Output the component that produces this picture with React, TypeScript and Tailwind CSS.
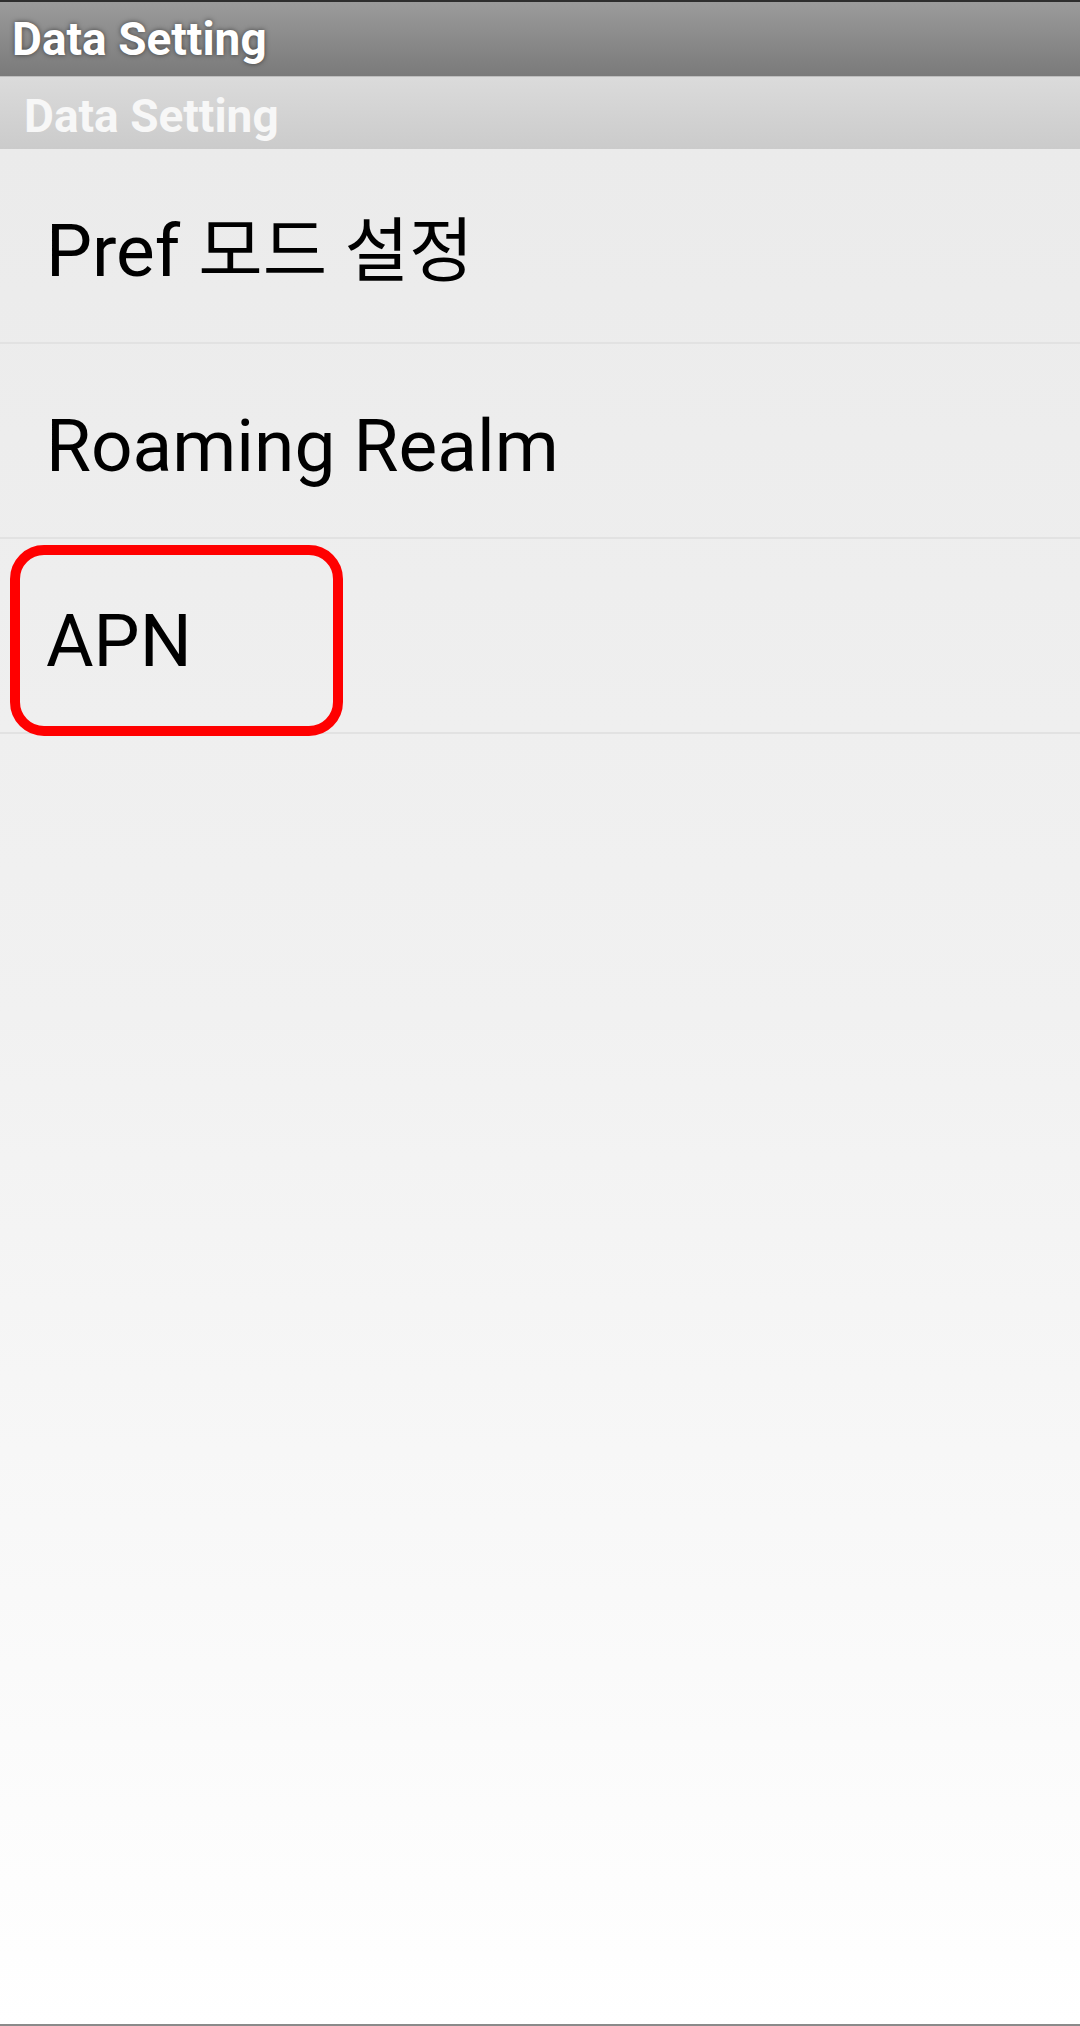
const items = [
  { latin: 'Pref ', korean: '모드 설정' },
  { latin: 'Roaming Realm', korean: '' },
  { latin: 'APN', korean: '' },
]

export default function App() {
  return (
    <div
      className="flex h-[2026px] w-[1080px] flex-col overflow-hidden bg-gradient-to-b from-[#eaeaea] via-[#f1f1f1] to-[#ffffff]"
      style={{ fontFamily: 'Roboto, "Noto Sans CJK KR", sans-serif' }}
    >
      {/* title bar */}
      <div className="flex h-[76px] shrink-0 items-center border-t-2 border-[#2e2e2e] bg-gradient-to-b from-[#9b9b9b] to-[#7a7a7a] pl-[12px]">
        <span className="text-[46px] font-bold leading-none text-white [text-shadow:0_0_5px_rgba(0,0,0,0.55)]">
          Data Setting
        </span>
      </div>

      {/* section header */}
      <div className="flex h-[73px] shrink-0 items-center border-t border-[#bdbdbd] bg-gradient-to-b from-[#dbdbdb] to-[#cbcbcb] pl-[24px] pt-[6px]">
        <span className="text-[46px] font-bold leading-none text-[#f7f7f7]">Data Setting</span>
      </div>

      <div className="flex flex-col">
        {items.map((item, i) => (
          <div
            key={i}
            className="relative flex h-[195px] items-center border-b-2 border-[#e2e2e2] pl-[46px] pt-[12px]"
          >
            <span className="whitespace-pre text-[73px] leading-none text-black">
              {item.latin}
              {item.korean && <span className="text-[70px]">{item.korean}</span>}
            </span>
            {item.latin === 'APN' && (
              <div className="absolute left-[10px] top-[6px] h-[191px] w-[333px] rounded-[34px] border-[10px] border-[#ff0000]" />
            )}
          </div>
        ))}
      </div>

      <div className="flex-1" />
      <div className="h-[2px] shrink-0 bg-[#8a8a8a]" />
    </div>
  )
}
